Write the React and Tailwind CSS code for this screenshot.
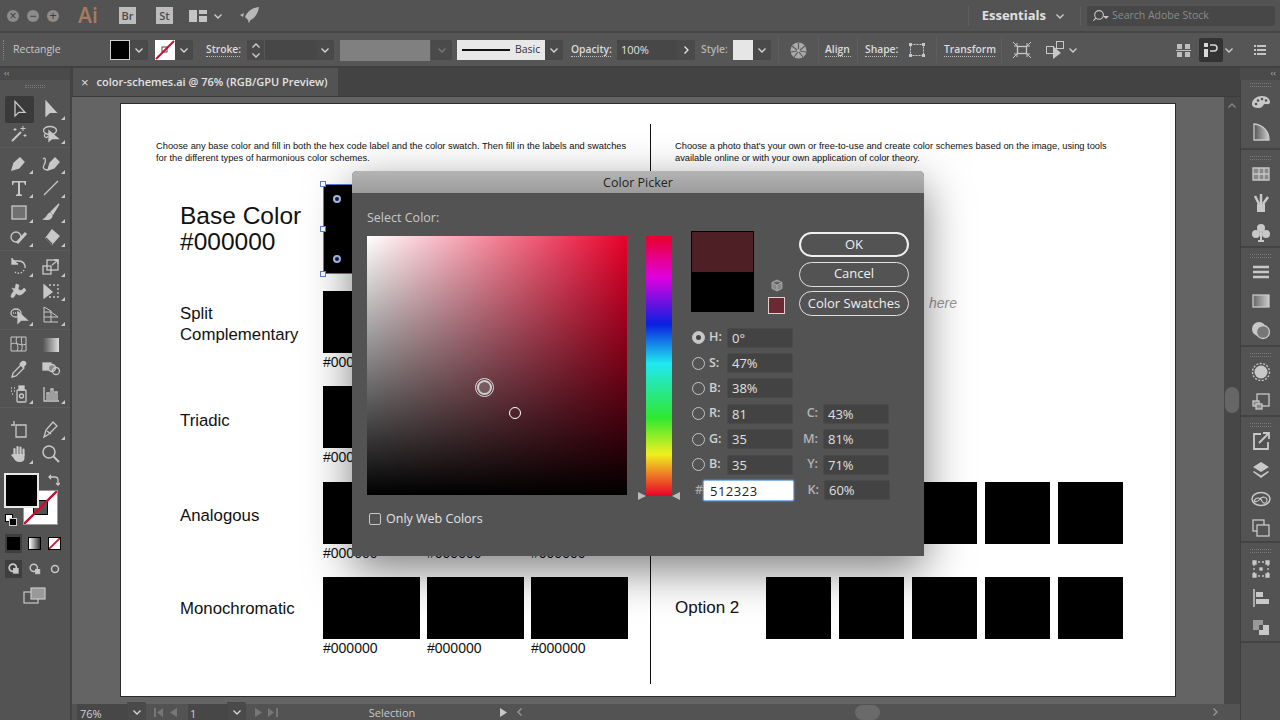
import React from 'react';
import { Search } from 'lucide-react';

const C = '#c8c8c8';

const Chevron = ({ color = '#d0d0d0' }) => (
  <svg width="10" height="10" viewBox="0 0 10 10" fill="none" stroke={color} strokeWidth="1.3">
    <path d="M1.5 3.5 5 7l3.5-3.5" />
  </svg>
);

const Ico = ({ children, size = 20 }) => (
  <svg width={size} height={size} viewBox="0 0 20 20" fill="none" stroke={C} strokeWidth="1.3">
    {children}
  </svg>
);

const leftTools = [
  [
    [
      <path d="M6 2.500V17l3.800-3.600H16z" />,
      <path d="M5 2.500V17l3.800-3.600H15z" fill={C} />,
    ],
    [
      <>
        <path d="M3 17 12 8" strokeWidth="2" />
        <path d="M14 2v5M11.500 4.500h5M6 4v3M4.500 5.500h3M16 10v3M14.500 11.500h3" strokeWidth="1" />
      </>,
      <>
        <ellipse cx="9" cy="6.500" rx="6.500" ry="4" />
        <path d="M4 10c-2 3 2 5 3 2" />
        <path d="M8 7v10l3-2.500h6z" fill={C} />
      </>,
    ],
  ],
  [
    [
      <path d="M3 17l2-7 6-5 4 4-5 6zM3 17l4-4" fill={C} />,
      <>
        <path d="M2 6c3-3 3 3 1 6s0 5 4 5" />
        <path d="M7 17l2-7 5-5 4 4-5 6z" fill={C} />
      </>,
    ],
    [
      <path d="M3 3h14v4h-1l-1-2.500h-4V16l2 .7V18H7v-1.300L9 16V4.500H5L4 7H3z" fill={C} stroke="none" />,
      <path d="M3 17 17 3" />,
    ],
    [
      <rect x="3" y="4" width="14" height="13" fill="#707070" />,
      <>
        <path d="M18 2 10 10l2 2z" fill={C} />
        <path d="M9 11c-3 1-2 4-6 6 4 1 8 0 8-4z" fill={C} />
      </>,
    ],
    [
      <>
        <circle cx="7" cy="10" r="5" />
        <path d="M8 16 17 6" strokeWidth="3" />
      </>,
      <>
        <path d="M11 3 18 9l-7 8-6-6z" fill={C} />
        <path d="M5 11l6 6" stroke="#535353" />
      </>,
    ],
  ],
  [
    [
      <>
        <path d="M3 5h7a6 6 0 0 1 6 7" strokeWidth="1.500" />
        <path d="M3 2v6h6" fill={C} />
        <path d="M15 14a6 6 0 0 1-9 2" strokeDasharray="1.500 1.500" />
      </>,
      <>
        <rect x="2" y="10" width="8" height="8" />
        <rect x="6" y="4" width="11" height="10" />
        <path d="M11 9l5-4M13 4h4v4" />
      </>,
    ],
    [
      <path d="M2 16c2 2 4-1 5-4 2 3 6 3 10-3l-2-2c-2 3-4 3-6 1l1-4-3-1-1 5-3-1 2 3c-2 2-3 4-3 6z" fill={C} strokeWidth="0.600" />,
      <>
        <path d="M3 4v13l8-6z" fill={C} />
        <path d="M8 4h9v12H8" strokeDasharray="2 2" />
      </>,
    ],
    [
      <>
        <ellipse cx="7" cy="8" rx="5" ry="4" />
        <path d="M9 7v11l3-3h6z" fill={C} />
        <path d="M4 8h5" strokeDasharray="1 1" />
      </>,
      <path d="M3 2v15h14M3 2l7 4v11M3 7h7l7 5M3 12h14" strokeWidth="1" />,
    ],
  ],
  [
    [
      <path d="M2 2h15v14H2zM2 9c5-3 9 3 15 0M8 2c-3 5 3 9 0 14M13 2c-2 5 2 9-1 14" strokeWidth="1" />,
      <>
        <defs>
          <linearGradient id="gt" x1="0" x2="1">
            <stop offset="0" stopColor="#555" />
            <stop offset="1" stopColor="#ddd" />
          </linearGradient>
        </defs>
        <rect x="2" y="3" width="16" height="14" fill="url(#gt)" stroke="none" />
      </>,
    ],
    [
      <>
        <path d="M3 18l1-4 8-8 3 3-8 8z" />
        <path d="M11 5l2-2c2-2 5 1 3 3l-2 2z" fill={C} />
      </>,
      <>
        <rect x="2" y="4" width="8" height="7" fill={C} />
        <circle cx="11" cy="9" r="3.500" fill="#888" />
        <circle cx="15" cy="12" r="3.500" />
      </>,
    ],
    [
      <>
        <path d="M2 4h1M5 4h1M2 7h1M5 7h1M3 10h1" strokeWidth="1.500" />
        <rect x="8" y="6" width="9" height="12" rx="1" />
        <rect x="10" y="2" width="5" height="4" fill={C} />
        <circle cx="12.500" cy="12" r="2" />
      </>,
      <path d="M3 3v14h15M6 16V9h2v7M10 16V5h2v11M14 16V8h2v8" />,
    ],
  ],
  [
    [
      <path d="M5 2v4M2 6h4M7 6h10v12H7z" />,
      <>
        <path d="M3 18l2-7 7-8 4 4-8 8z" />
        <path d="M6 12l4 3" />
      </>,
    ],
    [
      <>
        <path d="M5.500 11V5M8.500 10V3M11.500 10V3.500M14.500 11V5.500" strokeWidth="2.200" strokeLinecap="round" />
        <path d="M4.500 10h11v4c0 3-2 4-5 4-3 0-4-1-6-4L2 11c1-1 2-1 2.500-1z" fill={C} stroke="none" />
      </>,
      <>
        <circle cx="8" cy="8" r="6" strokeWidth="1.500" />
        <path d="M12.500 12.500 18 18" strokeWidth="2" />
      </>,
    ],
  ],
];

const hasCorner = new Set(['0-1-1', '1-0-0', '1-0-1', '1-1-0', '1-1-1', '1-2-0', '1-2-1', '1-3-0', '1-3-1', '2-0-0', '2-0-1', '2-1-1', '2-2-0', '2-2-1', '3-2-0', '3-2-1', '4-0-1', '4-1-0', '0-0-1']);

const LeftPanel = () => (
  <div className="w-[72px] shrink-0 bg-[#535353] border-r-2 border-[#434343] flex flex-col">
    <div className="h-[12px] pl-[4px] text-[9px] leading-[10px] text-[#aaa] bg-[#4a4a4a]">‹‹</div>
    <div className="mt-[5px] mx-auto w-[20px] h-[3px] border-x-0 border-y border-dotted border-[#7a7a7a]" />
    <div className="mt-[9px] flex flex-col gap-[3px]">
      {leftTools.map((group, g) => (
        <div key={g} className="border-b border-[#5b5b5b] pb-[1px] last:mt-[6px] last:border-b-0">
          {group.map((row, r) => (
            <div key={r} className="h-[24.500px] flex">
              {row.map((icon, i) => (
                <div key={i} className="relative w-[32px] flex items-center justify-center first:ml-[3px]">
                  {g === 0 && r === 0 && i === 0 && (
                    <div className="absolute left-[2px] right-[1px] top-[-1px] bottom-[-1px] bg-[#3a3a3a] rounded-[2px]" />
                  )}
                  <div className="relative flex"><Ico size={20}>{icon}</Ico></div>
                  {hasCorner.has(`${g}-${r}-${i}`) && (
                    <div className="absolute right-[2px] bottom-[2px] w-0 h-0 border-l-[4px] border-l-transparent border-b-[4px] border-b-[#c8c8c8]" />
                  )}
                </div>
              ))}
            </div>
          ))}
        </div>
      ))}
    </div>

    {/* fill / stroke */}
    <div className="relative mt-[6px] ml-[4px] h-[54px] w-[56px]">
      <div className="absolute left-[19px] top-[17px] w-[35px] h-[35px] bg-white border border-[#999]">
        <div className="m-[9px] h-[15px] bg-[#535353] border border-black" />
        <svg className="absolute inset-0" viewBox="0 0 35 35">
          <path d="M0 35 35 0" stroke="#c8102e" strokeWidth="2.500" />
        </svg>
      </div>
      <div className="absolute left-0 top-0 w-[35px] h-[35px] bg-black border-2 border-[#e8e8e8]" />
      <svg className="absolute left-[44px] top-[1px]" width="12" height="12" viewBox="0 0 12 12" fill="none" stroke={C} strokeWidth="1.300">
        <path d="M1 3h6a3 3 0 0 1 3 3v5M3 1 1 3l2 2M8 9l2 2 2-2" />
      </svg>
      <div className="absolute left-[1px] top-[41px] w-[8px] h-[8px] bg-white border border-black" />
      <div className="absolute left-[5px] top-[45px] w-[8px] h-[8px] bg-black border border-[#ccc]" />
    </div>

    <div className="mt-[7px] ml-[5px] flex items-center">
      <div className="w-[17px] h-[19px] bg-[#3e3e3e] flex items-center justify-center">
        <div className="w-[13px] h-[13px] bg-black" />
      </div>
      <div className="ml-[6px] w-[13px] h-[13px] border border-black bg-[linear-gradient(to_right,#fff,#333)]" />
      <div className="relative ml-[7px] w-[13px] h-[13px] bg-white border border-black overflow-hidden">
        <svg className="absolute inset-0" viewBox="0 0 13 13"><path d="M0 13 13 0" stroke="#c8102e" strokeWidth="2" /></svg>
      </div>
    </div>

    <div className="mt-[7px] ml-[5px] flex items-center">
      <div className="w-[17px] h-[18px] bg-[#3e3e3e] flex items-center justify-center">
        <Ico size={12}><circle cx="8" cy="8" r="6" strokeWidth="3" /><rect x="9" y="9" width="8" height="8" fill={C} /></Ico>
      </div>
      <div className="ml-[4px] w-[17px] flex justify-center">
        <Ico size={12}><circle cx="8" cy="8" r="6" strokeWidth="2.500" /><rect x="11" y="11" width="7" height="7" fill={C} /></Ico>
      </div>
      <div className="ml-[3px] w-[17px] flex justify-center">
        <Ico size={10}><circle cx="10" cy="10" r="7" strokeWidth="3" /></Ico>
      </div>
    </div>

    <div className="mt-[9px] ml-[23px] flex">
      <svg width="23" height="17" viewBox="0 0 23 17" fill="none" stroke={C} strokeWidth="1.200">
        <rect x="1" y="5" width="14" height="11" />
        <rect x="8" y="1" width="14" height="11" fill="#999" />
      </svg>
    </div>
  </div>
);

const grad = (id, a, b) => (
  <defs>
    <linearGradient id={id} x1="0" x2="1">
      <stop offset="0" stopColor={a} />
      <stop offset="1" stopColor={b} />
    </linearGradient>
  </defs>
);

const rightSections = [
  { h: 82, pt: 25, gap: 9, icons: [
    <>
      <path d="M1 11c0-5 5-8 10-8s8 3 8 6-3 2-5 2-2 4-6 4-7-1-7-4z" fill={C} stroke="none" />
      <circle cx="5" cy="11" r="1.300" fill="#535353" stroke="none" />
      <circle cx="7" cy="7.500" r="1.300" fill="#535353" stroke="none" />
      <circle cx="11" cy="6" r="1.300" fill="#535353" stroke="none" />
      <circle cx="15" cy="7.500" r="1.300" fill="#535353" stroke="none" />
    </>,
    <>{grad('gq', '#555', '#ccc')}<path d="M3 2v16h15C18 9 12 3 3 2z" fill="url(#gq)" /></>,
  ] },
  { h: 98, pt: 14, gap: 9, icons: [
    <path d="M2 4h16v12H2zM2 10h16M8 4v12M13 4v12" fill="#888" />,
    <>
      <rect x="6" y="11" width="8" height="8" fill={C} stroke="none" />
      <path d="M8 11 4 3M10 11V1M12 11l5-7" strokeWidth="2.500" />
    </>,
    <>
      <circle cx="10" cy="6" r="4" fill={C} stroke="none" />
      <circle cx="5" cy="12" r="4" fill={C} stroke="none" />
      <circle cx="15" cy="12" r="4" fill={C} stroke="none" />
      <path d="M10 10v8M7 19h6" strokeWidth="2" />
    </>,
  ] },
  { h: 99, pt: 14, gap: 9, icons: [
    <path d="M2 5h16M2 10h16M2 15h16" strokeWidth="2.500" />,
    <>{grad('gr', '#666', '#ccc')}<rect x="2" y="4" width="16" height="12" fill="url(#gr)" /></>,
    <>
      <circle cx="8" cy="9" r="7" fill={C} stroke="none" />
      <circle cx="12" cy="12" r="6.500" fill="#777" />
    </>,
  ] },
  { h: 70, pt: 15, gap: 9, icons: [
    <>
      <circle cx="10" cy="10" r="8.500" strokeDasharray="2 1.500" />
      <circle cx="10" cy="10" r="6.500" fill={C} stroke="none" />
    </>,
    <>
      <rect x="6" y="3" width="12" height="12" />
      <rect x="2" y="10" width="6" height="5" fill="#888" />
      <rect x="5" y="13" width="6" height="5" fill="#888" />
    </>,
  ] },
  { h: 126, pt: 14, gap: 9, icons: [
    <>
      <path d="M10 3H3v15h14v-7" strokeWidth="1.800" />
      <path d="M8 12 17 3M12 2h6v6" strokeWidth="1.800" />
    </>,
    <>
      <path d="M10 2l8 5-8 5-8-5z" fill={C} stroke="none" />
      <path d="M3 11l-1 1 8 6 8-6-1-1-7 4.500z" fill={C} stroke="none" />
    </>,
    <>
      <ellipse cx="10" cy="10" rx="9" ry="6.500" strokeWidth="1.500" />
      <path d="M3 12c2-4 6-4 8 0s5 2 5-1-5-4-7-1-5 3-6 2" strokeWidth="1.100" />
    </>,
    <>
      <rect x="2" y="2" width="11" height="11" />
      <rect x="6" y="7" width="12" height="11" fill="#535353" />
    </>,
  ] },
  { h: 100, pt: 16, gap: 9, icons: [
    <>
      <rect x="3" y="3" width="14" height="14" strokeDasharray="2 2" />
      <path d="M2 2h3v3H2zM15 2h3v3h-3zM2 15h3v3H2zM15 15h3v3h-3z" fill={C} />
      <rect x="9" y="9" width="2" height="2" fill={C} />
    </>,
    <>
      <path d="M3 1v18" strokeWidth="1.500" />
      <rect x="5" y="4" width="7" height="5" fill={C} stroke="none" />
      <rect x="5" y="11" width="13" height="5" fill={C} stroke="none" />
    </>,
    <>
      <rect x="2" y="3" width="10" height="10" fill="#999" stroke="none" />
      <rect x="8" y="8" width="10" height="10" fill={C} stroke="none" />
      <rect x="8" y="8" width="4" height="5" fill="#535353" stroke="none" />
    </>,
  ] },
];

const RightPanel = () => (
  <div className="w-[40px] shrink-0 bg-[#535353] border-l border-[#3f3f3f] flex flex-col">
    <div className="absolute top-[68px] right-0 w-[40px] h-[12px] bg-[#4a4a4a] text-right pr-[4px] text-[9px] leading-[10px] text-[#aaa]">‹‹</div>
    {rightSections.map((s, i) => (
      <div
        key={i}
        className="relative flex flex-col items-center border-b-2 border-[#444] box-border"
        style={{ height: s.h, paddingTop: s.pt, gap: s.gap }}
      >
        <div className={`absolute ${i === 0 ? 'top-[15px]' : 'top-[6px]'} left-[9px] w-[21px] h-[4px] border-x-0 border-y border-dotted border-[#7a7a7a]`} />
        {s.icons.map((icon, j) => (
          <div key={j} className="flex"><Ico>{icon}</Ico></div>
        ))}
      </div>
    ))}
  </div>
);

const TopBar = () => (
  <div className="h-[31px] shrink-0 bg-[#535353] border-b-2 border-[#464646] flex items-center box-content">
    <div className="ml-[7px] flex items-center gap-[8px]">
      {['×', '−', '+'].map((c) => (
        <div key={c} className="w-[12px] h-[12px] rounded-full bg-[#8c8c8c] flex items-center justify-center text-[12px] leading-none text-[#3d3d3d] font-['Liberation_Sans']">{c}</div>
      ))}
    </div>
    <div className="ml-[19px] w-[22px] text-[21px] leading-none font-semibold text-[#a87a5f]">Ai</div>
    <div className="ml-[19px] w-[17px] h-[17px] bg-[#bdbdbd] text-[#4a4a4a] text-[11px] font-semibold leading-[17px] text-center">Br</div>
    <div className="ml-[20px] w-[17px] h-[17px] bg-[#bdbdbd] text-[#4a4a4a] text-[11px] font-semibold leading-[17px] text-center">St</div>
    <svg className="ml-[16px]" width="18" height="12" viewBox="0 0 18 12" fill="#c4c4c4">
      <rect x="0" y="0" width="8" height="12" /><rect x="10" y="0" width="8" height="4" /><rect x="10" y="6" width="8" height="6" />
    </svg>
    <div className="ml-[6px] flex"><Chevron /></div>
    <svg className="ml-[17px]" width="20" height="18" viewBox="0 0 20 18" fill="#b8b8b8">
      <path d="M19 0C12 1 8 4 5 10l4 4c6-3 9-7 10-14zM4 6 0 8l3 2zM9 16l2-4-3 2z" />
    </svg>
    <div className="ml-auto w-px h-[20px] bg-[#5e5e5e]" />
    <span className="ml-[13px] text-[13px] font-bold text-[#e0e0e0]">Essentials</span>
    <div className="ml-[9px] flex"><Chevron /></div>
    <div className="ml-[15px] w-px h-[20px] bg-[#5e5e5e]" />
    <div className="ml-[6px] mr-[5px] w-[188px] h-[20px] bg-[#474747] rounded-[3px] flex items-center pl-[5px]">
      <Search size={13} color="#c8c8c8" className="-scale-x-100" />
      <div className="-ml-[2px] mt-[3px] w-0 h-0 border-x-[3px] border-x-transparent border-t-[3px] border-t-[#c8c8c8]" />
      <span className="ml-[3px] text-[10.500px] text-[#8a8a8a]">Search Adobe Stock</span>
    </div>
  </div>
);

const ChevBox = ({ w = 18, dim }) => (
  <div className="h-[20px] bg-[#4a4a4a] border border-[#484848] flex items-center justify-center rounded-r-[2px]" style={{ width: w }}>
    <Chevron color={dim ? '#777' : '#d8d8d8'} />
  </div>
);

const Label = ({ children, className = '' }) => (
  <span className={`text-[10.300px] font-semibold leading-[13px] whitespace-nowrap text-[#dcdcdc] border-b border-dotted border-[#bdbdbd] ${className}`}>{children}</span>
);

const Sep = ({ className = '' }) => <div className={`w-px h-[26px] bg-[#5e5e5e] ${className}`} />;

const ControlBar = () => (
  <div className="h-[32px] pt-[1px] shrink-0 bg-[#565656] border-b-2 border-[#404040] flex items-center box-content">
    <div className="ml-[3px] w-[2px] h-[20px] border-l border-dotted border-[#888]" />
    <span className="ml-[8px] w-[97px] text-[10.500px] text-[#c8c8c8]">Rectangle</span>
    <div className="w-[20px] h-[20px] bg-black border border-[#d0d0d0]" />
    <ChevBox />
    <div className="relative ml-[7px] w-[20px] h-[20px] bg-white overflow-hidden">
      <svg className="absolute inset-0" viewBox="0 0 20 20">
        <rect x="7" y="7" width="5" height="5" fill="none" stroke="#444" />
        <path d="M1 19 19 1" stroke="#c8102e" strokeWidth="2" />
      </svg>
    </div>
    <ChevBox />
    <Label className="ml-[13px] w-[34px]">Stroke:</Label>
    <div className="ml-[7px] w-[17px] h-[20px] bg-[#4a4a4a] flex flex-col items-center justify-center gap-[1px]">
      <div className="rotate-180 flex"><Chevron /></div>
      <div className="-mt-[2px] flex"><Chevron /></div>
    </div>
    <div className="ml-px w-[51px] h-[20px] bg-[#474747]" />
    <ChevBox />
    <div className="ml-[6px] w-[90px] h-[21px] bg-[#808080]" />
    <div className="ml-px flex"><ChevBox w={21} dim /></div>
    <div className="ml-[5px] w-[88px] h-[20px] bg-[#e8e8e8] flex items-center pl-[5px]">
      <div className="w-[48px] h-[2px] bg-[#111]" />
      <span className="ml-[5px] text-[10.500px] text-[#333]">Basic</span>
    </div>
    <ChevBox />
    <Label className="ml-[8px] w-[40px]">Opacity:</Label>
    <div className="ml-[6px] w-[60px] h-[20px] bg-[#474747] text-[11px] leading-[20px] pl-[4px] text-[#e0e0e0]">100%</div>
    <div className="w-[18px] h-[20px] bg-[#4a4a4a] flex items-center justify-center">
      <div className="-rotate-90 flex"><Chevron color="#e8e8e8" /></div>
    </div>
    <span className="ml-[6px] w-[26px] whitespace-nowrap text-[10.300px] font-semibold text-[#b4b4b4]">Style:</span>
    <div className="ml-[6px] w-[20px] h-[20px] bg-[#e6e6e6]" />
    <ChevBox />
    <Sep className="ml-[7px]" />
    <svg className="ml-[11px]" width="17" height="17" viewBox="0 0 17 17">
      <circle cx="8.500" cy="8.500" r="8" fill="#aaa" />
      <path d="M8.500 1v6M2 4l5 4M1 10l6-1M4 15l4-5M13 15l-4-5M16 10l-6-1M15 4l-5 4" stroke="#5e5e5e" strokeWidth="1.200" />
    </svg>
    <Sep className="ml-[11px]" />
    <Label className="ml-[6px] w-[26px]">Align</Label>
    <Sep className="ml-[6px]" />
    <Label className="ml-[7px] w-[32px]">Shape:</Label>
    <svg className="ml-[12px]" width="16" height="14" viewBox="0 0 16 14" fill="none" stroke={C}>
      <rect x="1.500" y="1.500" width="13" height="11" strokeDasharray="2 1" />
      <path d="M0 0h3v3H0zM13 0h3v3h-3zM0 11h3v3H0zM13 11h3v3h-3z" fill={C} stroke="none" />
    </svg>
    <Sep className="ml-[11px]" />
    <Label className="ml-[7px] w-[51px]">Transform</Label>
    <Sep className="ml-[6px]" />
    <svg className="ml-[11px]" width="18" height="16" viewBox="0 0 18 16" fill="none" stroke={C}>
      <rect x="4.500" y="4.500" width="9" height="7" strokeWidth="1.300" />
      <path d="M0 0l4 4M18 0l-4 4M0 16l4-4M18 16l-4-4M1 4h3V1M17 4h-3V1M1 12h3v3M17 12h-3v3" />
    </svg>
    <svg className="ml-[15px]" width="19" height="18" viewBox="0 0 19 18" fill="none" stroke={C}>
      <rect x="0.500" y="5.500" width="7" height="7" />
      <rect x="10.500" y="0.500" width="7" height="7" />
      <path d="M7 5v13l8-6z" fill={C} stroke="none" />
    </svg>
    <div className="ml-[3px] flex"><Chevron /></div>
    <svg className="ml-auto" width="15" height="13" viewBox="0 0 15 13" fill="#bdbdbd">
      <rect x="1" y="0" width="5" height="5" /><rect x="9" y="0" width="5" height="5" />
      <rect x="1" y="8" width="5" height="5" /><rect x="9" y="8" width="5" height="5" />
      <rect x="0" y="6" width="15" height="1" />
    </svg>
    <div className="ml-[8px] w-[24px] h-[24px] bg-[#333] rounded-[2px] flex items-center justify-center">
      <svg width="14" height="16" viewBox="0 0 14 16" fill="none" stroke="#d8d8d8" strokeWidth="1.500">
        <path d="M0 1h4v4H0zM0 7h4v8H0z" fill="#d8d8d8" stroke="none" />
        <path d="M6 3h4a3 3 0 0 1 0 6H6" />
      </svg>
    </div>
    <div className="ml-[1px] flex"><Chevron /></div>
    <svg className="ml-[20px] mr-[14px]" width="12" height="10" viewBox="0 0 12 10" fill="#c4c4c4">
      <rect x="0" y="0" width="2" height="2" /><rect x="3" y="0" width="9" height="2" />
      <rect x="0" y="4" width="2" height="2" /><rect x="3" y="4" width="9" height="2" />
      <rect x="0" y="8" width="2" height="2" /><rect x="3" y="8" width="9" height="2" />
    </svg>
  </div>
);

const TabBar = () => (
  <div className="h-[28px] shrink-0 bg-[#434343] border-b border-[#3b3b3b] box-content flex">
    <div className="w-[265px] ml-[1px] bg-[#535353] flex items-center pl-[8px]">
      <span className="text-[13px] leading-none text-[#ddd] font-['Liberation_Sans']">×</span>
      <span className="ml-[8px] text-[11px] font-semibold text-[#e2e2e2] whitespace-nowrap">color-schemes.ai @ 76% (RGB/GPU Preview)</span>
    </div>
  </div>
);

const Swatches = ({ count, w, gap, hex }) => (
  <div className="flex" style={{ gap }}>
    {Array.from({ length: count }).map((_, i) => (
      <div key={i} style={{ width: w }}>
        <div className="h-[62px] bg-black" />
        {hex && <div className="text-[14px] leading-[18px] text-[#111]">#000000</div>}
      </div>
    ))}
  </div>
);

// pt nudges the label down inside the swatch height
const schemeRows = [
  { label: ['Split', 'Complementary'], pt: 5 },
  { label: ['Triadic'], pt: 7 },
  { label: ['Analogous'], pt: 7 },
  { label: ['Monochromatic'], pt: 2 },
];

const Artboard = () => (
  <div className="w-[1056px] h-[594px] shrink-0 bg-white border border-[#2b2b2b] flex font-['Liberation_Sans',sans-serif] box-border">
    <div className="w-[530px] h-[560px] mt-[20px] border-r border-[#111] pl-[35px] pt-[17px] box-border">
      <p className="w-[480px] text-[9.300px] leading-[11.500px] text-[#111]">
        Choose any base color and fill in both the hex code label and the color swatch. Then fill in the labels and swatches for the different types of harmonious color schemes.
      </p>
      <div className="mt-[20px] flex pl-[24px]">
        <div className="w-[143px] pt-[19px] text-[24.500px] leading-[26px] text-[#111]">
          Base Color<br />#000000
        </div>
        <div className="relative w-[97px] h-[90px] bg-black border border-[#5b7fd8]">
          <div className="absolute left-[-4px] top-[-4px] w-[6px] h-[6px] bg-white border border-[#5b7fd8]" />
          <div className="absolute left-[-4px] top-[41px] w-[6px] h-[6px] bg-white border border-[#5b7fd8]" />
          <div className="absolute left-[-4px] bottom-[-4px] w-[6px] h-[6px] bg-white border border-[#5b7fd8]" />
          <div className="absolute left-[9px] top-[10px] w-[8px] h-[8px] rounded-full bg-[#14205a] border-2 border-[#b9c8f2]" />
          <div className="absolute left-[9px] bottom-[10px] w-[8px] h-[8px] rounded-full bg-[#14205a] border-2 border-[#b9c8f2]" />
        </div>
      </div>
      <div className="mt-[17px] pl-[24px] flex flex-col">
        {schemeRows.map((row) => (
          <div key={row.label[0]} className="h-[95.300px] flex items-start">
            <div className="w-[143px] h-[62px] flex flex-col justify-center text-[16.800px] leading-[20.500px] text-[#111]" style={{ paddingTop: row.pt }}>
              {row.label.map((l) => <div key={l}>{l}</div>)}
            </div>
            <Swatches count={3} w={97} gap={7} hex />
          </div>
        ))}
      </div>
    </div>
    <div className="pl-[24px] pt-[37px]">
      <p className="w-[440px] text-[9.300px] leading-[11.500px] text-[#111]">
        Choose a photo that's your own or free-to-use and create color schemes based on the image, using tools available online or with your own application of color theory.
      </p>
      <div className="h-[318px] w-[282px] pt-[130px] text-right text-[14px] leading-[18px] italic text-[#999]">here</div>
      <div className="h-[95px] flex items-start">
        <div className="w-[91px] h-[62px] flex items-center text-[17px] text-[#111]">Option 1</div>
        <Swatches count={5} w={65} gap={8} />
      </div>
      <div className="flex items-start">
        <div className="w-[91px] h-[62px] flex items-center text-[17px] text-[#111]">Option 2</div>
        <Swatches count={5} w={65} gap={8} />
      </div>
    </div>
  </div>
);

const StatusBar = () => (
  <div className="h-[16px] shrink-0 bg-[#535353] flex items-center text-[11px] text-[#d0d0d0] pl-[5px]">
    <div className="w-[50px] h-[16px] bg-[#474747] pl-[3px] pt-[1px] leading-[17px]">76%</div>
    <ChevBox w={19} />
    <div className="ml-[8px] w-[34px] flex items-center gap-[6px] text-[#777]">
      <svg width="10" height="9" viewBox="0 0 10 9" fill="#777"><rect x="0" y="0" width="2" height="9" /><path d="M9 0v9L3 4.500z" /></svg>
      <svg width="7" height="9" viewBox="0 0 7 9" fill="#777"><path d="M7 0v9L0 4.500z" /></svg>
    </div>
    <div className="w-[39px] h-[16px] bg-[#474747] pl-[2px] pt-[1px] leading-[17px]">1</div>
    <ChevBox w={19} />
    <div className="ml-[9px] w-[34px] flex items-center gap-[6px]">
      <svg width="7" height="9" viewBox="0 0 7 9" fill="#777"><path d="M0 0v9l7-4.500z" /></svg>
      <svg width="10" height="9" viewBox="0 0 10 9" fill="#777"><path d="M0 0v9l6-4.500z" /><rect x="8" y="0" width="2" height="9" /></svg>
    </div>
    <div className="w-[206px] pt-[3px] text-center text-[#c8c8c8]">Selection</div>
    <svg className="ml-[5px]" width="7" height="9" viewBox="0 0 7 9" fill="#c8c8c8"><path d="M0 0v9l7-4.500z" /></svg>
    <div className="ml-[8px] flex rotate-90"><Chevron color="#999" /></div>
    <div className="ml-[330px] w-[25px] h-[15px] rounded-full bg-[#6a6a6a]" />
    <div className="ml-[330px] -rotate-90 flex"><Chevron color="#999" /></div>
  </div>
);

const VScroll = () => (
  <div className="w-[16px] shrink-0 bg-[#474747] flex flex-col items-center pt-[4px]">
    <div className="rotate-180 flex"><Chevron color="#888" /></div>
    <div className="mt-[276px] w-[14px] h-[26px] rounded-full bg-[#666]" />
  </div>
);

const hsb = [['H:', '0°', true], ['S:', '47%'], ['B:', '38%']];
const rgb = [['R:', '81', 'C:', '43%'], ['G:', '35', 'M:', '81%'], ['B:', '35', 'Y:', '71%']];

const Radio = ({ on }) => (
  <div className={`ml-[1px] w-[13px] h-[13px] rounded-full flex items-center justify-center border border-[#c4c4c4] ${on ? 'bg-[#c8c8c8]' : ''}`}>
    {on && <div className="w-[5px] h-[5px] rounded-full bg-[#444]" />}
  </div>
);

const Field = ({ value, w = 66 }) => (
  <div className="h-[20px] bg-[#434343] border border-[#4a4a4a] rounded-[2px] pl-[4px] text-[13px] leading-[19px] text-[#e0e0e0]" style={{ width: w }}>{value}</div>
);

const PickerButton = ({ children, primary }) => (
  <div className={`w-[110px] h-[25px] rounded-full flex items-center justify-center text-[13px] text-[#efefef] ${primary ? 'border-2 border-[#f0f0f0]' : 'border border-[#e0e0e0]'}`}>{children}</div>
);

const ColorPicker = () => (
  <div className="absolute left-[352px] top-[171px] w-[572px] h-[385px] bg-[#535353] rounded-t-[5px] shadow-[0_14px_45px_rgba(0,0,0,0.5)] flex flex-col">
    <div className="h-[22px] rounded-t-[5px] bg-[linear-gradient(to_bottom,#b4b4b4,#9c9c9c)] text-center text-[12.500px] leading-[23px] text-[#222]">Color Picker</div>
    <div className="pl-[15px] pt-[17px]">
      <div className="h-[16px] text-[12.500px] leading-[16px] text-[#c8c8c8]">Select Color:</div>
      <div className="mt-[5px] flex items-start">
        <div className="w-[260px] mt-[5px]">
          <div className="relative w-[260px] h-[259px] bg-[linear-gradient(to_bottom,transparent,#000),linear-gradient(to_right,#fff,#e8002a)]">
            <div className="absolute left-[108px] top-[142px] w-[19px] h-[19px] rounded-full border border-[#ddd] flex items-center justify-center">
              <div className="w-[15px] h-[15px] rounded-full border-2 border-[#cfcfcf] bg-[#8f8f8f]/40" />
            </div>
            <div className="absolute left-[142px] top-[171px] w-[12px] h-[12px] rounded-full border border-white" />
          </div>
          <div className="mt-[15px] ml-[2px] flex items-center">
            <div className="w-[12px] h-[12px] rounded-[2px] border border-[#c8c8c8]" />
            <span className="ml-[5px] text-[12.500px] text-[#e4e4e4]">Only Web Colors</span>
          </div>
        </div>
        <div className="relative ml-[19px] mt-[5px] w-[26px] h-[260px] bg-[linear-gradient(to_bottom,#ea0029,#e000e0_16%,#0a20e0_34%,#20e8f0_49%,#30e830_70%,#f0f020_84%,#ea0029)]">
          <div className="absolute left-[-8px] bottom-[-4px] w-0 h-0 border-y-[4px] border-y-transparent border-l-[8px] border-l-[#bbb]" />
          <div className="absolute right-[-8px] bottom-[-4px] w-0 h-0 border-y-[4px] border-y-transparent border-r-[8px] border-r-[#bbb]" />
        </div>
        <div className="ml-[19px] w-[218px]">
          <div className="flex items-start">
            <div className="w-[63px] h-[81px] border border-black flex flex-col">
              <div className="h-[40px] bg-[#4e1f24]" />
              <div className="flex-1 bg-black" />
            </div>
            <div className="ml-[14px] h-[83px] w-[17px] flex flex-col items-center justify-end">
              <svg width="12" height="13" viewBox="0 0 12 13" fill="#888" stroke="#b4b4b4" strokeWidth="0.800">
                <path d="M6 1l5 2.500v6L6 12 1 9.500v-6zM1 3.500 6 6l5-2.500M6 6v6" />
              </svg>
              <div className="mt-[5px] w-[17px] h-[17px] bg-[#6b2a33] border border-[#e2cfcf]" />
            </div>
            <div className="ml-[14px] flex flex-col gap-[4.500px] mt-[1px]">
              <PickerButton primary>OK</PickerButton>
              <PickerButton>Cancel</PickerButton>
              <PickerButton>Color Swatches</PickerButton>
            </div>
          </div>
          <div className="mt-[9px] flex flex-col">
            {hsb.map(([l, v, on]) => (
              <div key={l} className="h-[25.400px] flex items-center">
                <Radio on={on} />
                <span className="w-[22px] pl-[4px] text-[12.500px] font-semibold text-[#d0d0d0]">{l}</span>
                <Field value={v} />
              </div>
            ))}
            {rgb.map(([l, v, l2, v2]) => (
              <div key={l} className="h-[25.400px] flex items-center">
                <Radio />
                <span className="w-[22px] pl-[4px] text-[12.500px] font-semibold text-[#d0d0d0]">{l}</span>
                <Field value={v} />
                <span className="w-[30px] pr-[5px] text-right text-[12.500px] font-semibold text-[#b4b4b4]">{l2}</span>
                <Field value={v2} />
              </div>
            ))}
            <div className="h-[25.400px] flex items-center">
              <span className="w-[12px] text-[12.500px] font-semibold text-[#aaa] text-right">#</span>
              <div className="w-[91px] h-[21px] bg-white rounded-[2px] border border-[#8ab4e8] shadow-[0_0_2px_#8ab4e8] pl-[6px] text-[13px] leading-[20px] tracking-[0.5px] text-[#222]">512323</div>
              <span className="w-[30px] pr-[5px] text-right text-[12.500px] font-semibold text-[#b4b4b4]">K:</span>
              <Field value="60%" />
            </div>
          </div>
        </div>
      </div>
    </div>
  </div>
);

export default function App() {
  return (
    <div className="relative w-[1280px] h-[720px] overflow-hidden flex flex-col bg-[#535353] font-['Open_Sans',sans-serif]">
      <TopBar />
      <ControlBar />
      <div className="flex-1 min-h-0 flex">
        <LeftPanel />
        <div className="flex-1 min-w-0 flex flex-col">
          <TabBar />
          <div className="flex-1 min-h-0 flex">
            <div className="flex-1 bg-[#646464] pl-[48px] pt-[6px] overflow-hidden">
              <Artboard />
            </div>
            <VScroll />
          </div>
          <StatusBar />
        </div>
        <RightPanel />
      </div>
      <ColorPicker />
    </div>
  );
}
